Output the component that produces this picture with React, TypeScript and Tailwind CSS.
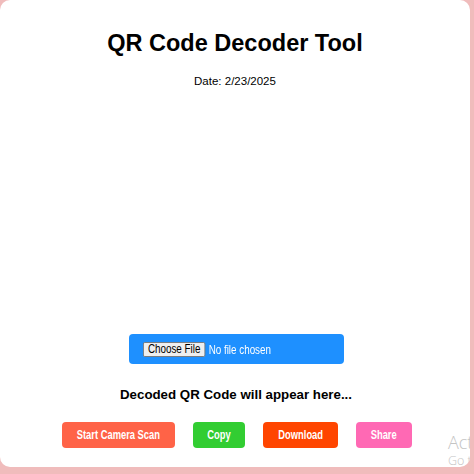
import React from 'react';

const buttons = [
    { label: 'Start Camera Scan', className: 'w-[113px] bg-[#ff6347]' },
    { label: 'Copy', className: 'w-[52px] bg-[#32cd32]' },
    { label: 'Download', className: 'w-[75px] bg-[#ff4500]' },
    { label: 'Share', className: 'w-[56px] bg-[#ff69b4]' },
];

export default function App() {
    const today = '2/23/2025';

    return (
        <div className="w-[474px] h-[474px] overflow-hidden bg-[#f0bcbc] font-['Liberation_Sans',Arial,sans-serif]">
            {/* Card */}
            <div className="relative overflow-hidden w-[470px] h-[467px] bg-white rounded-[10px] flex flex-col items-center">
                <h1 className="mt-[32px] text-[23.5px] leading-none font-bold text-black">QR Code Decoder Tool</h1>
                <p className="mt-[20px] text-[11.5px] leading-none text-black">Date: {today}</p>

                {/* Camera preview area (empty until scanning) */}
                <div className="h-[247px]" />

                {/* File picker */}
                <div className="ml-[3px] w-[215px] h-[30px] bg-[#1e90ff] rounded-[4px] flex items-center pl-[14px]">
                    <input
                        type="file"
                        accept="image/*"
                        className="origin-left scale-x-[0.82] text-[12px] leading-none text-white file:mr-[4px] file:h-[15px] file:px-[5px] file:py-0 file:bg-[#efefef] file:text-black file:border file:border-[#767676] file:rounded-[2px] file:text-[12px] file:leading-none"
                    />
                </div>

                <p className="mt-[24px] ml-[2px] text-[13.3px] leading-none font-bold text-black">Decoded QR Code will appear here...</p>

                {/* Actions */}
                <div className="mt-[21px] ml-[4px] flex gap-[18px]">
                    {buttons.map((b) => (
                        <button
                            key={b.label}
                            className={`h-[26px] rounded-[4px] flex items-center justify-center text-white text-[12px] font-bold ${b.className}`}
                        >
                            <span className="inline-block whitespace-nowrap scale-x-[0.78]">{b.label}</span>
                        </button>
                    ))}
                </div>

                {/* Windows activation watermark */}
                <div className="absolute left-[448px] top-[431px] whitespace-nowrap text-[#c4c4c4] font-['Open_Sans',sans-serif] font-light">
                    <div className="text-[18px] leading-[22px]">Activate Windows</div>
                    <div className="text-[12.5px] leading-[16px]">Go to Settings to activate Windows.</div>
                </div>
            </div>
        </div>
    );
}
